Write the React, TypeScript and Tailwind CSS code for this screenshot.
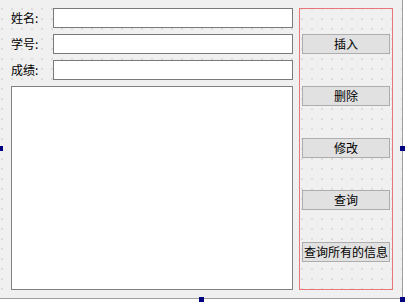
import React from 'react'

const cjk = { fontFamily: '"SimSun", "Noto Sans CJK SC", sans-serif' }

function Handle({ className }: { className: string }) {
  return <div className={`absolute w-[5px] h-[5px] bg-[#000080] ${className}`} />
}

export default function App() {
  const buttons = ['插入', '删除', '修改', '查询', '查询所有的信息']
  const fields = ['姓名:', '学号:', '成绩:']

  return (
    <div className="relative w-[414px] h-[303px] bg-white overflow-hidden text-[12px] text-black" style={cjk}>
      {/* designer form */}
      <div className="w-[403px] h-[299px] bg-[#f0f0f0] border-r border-b border-[#a0a0a0] bg-[image:radial-gradient(circle,#c4c4c4_0.6px,transparent_0.8px)] bg-[size:10px_10px] bg-[position:-3px_4px] flex pt-[8px] pl-[11px]">
        <div className="w-[282px] flex flex-col gap-[6px]">
          {fields.map(f => (
            <div key={f} className="flex items-center h-[20px]">
              <span className="w-[42px] leading-none">{f}</span>
              <div className="flex-1 h-[20px] bg-white border border-[#7a7a7a]" />
            </div>
          ))}
          <div className="h-[204px] bg-white border border-[#828282]" />
        </div>

        {/* vertical layout box */}
        <div className="ml-[6px] w-[94px] h-[282px] border border-[#e87878] flex flex-col px-[2px] pt-[25px] gap-[32px]">
          {buttons.map(b => (
            <div key={b} className="h-[20px] bg-[#e1e1e1] border border-[#adadad] flex items-center justify-center leading-none whitespace-nowrap">
              {b}
            </div>
          ))}
        </div>
      </div>

      <Handle className="left-[-2px] top-[146px]" />
      <Handle className="left-[400px] top-[146px]" />
      <Handle className="left-[199px] top-[297px]" />
      <Handle className="left-[400px] top-[297px]" />
    </div>
  )
}
